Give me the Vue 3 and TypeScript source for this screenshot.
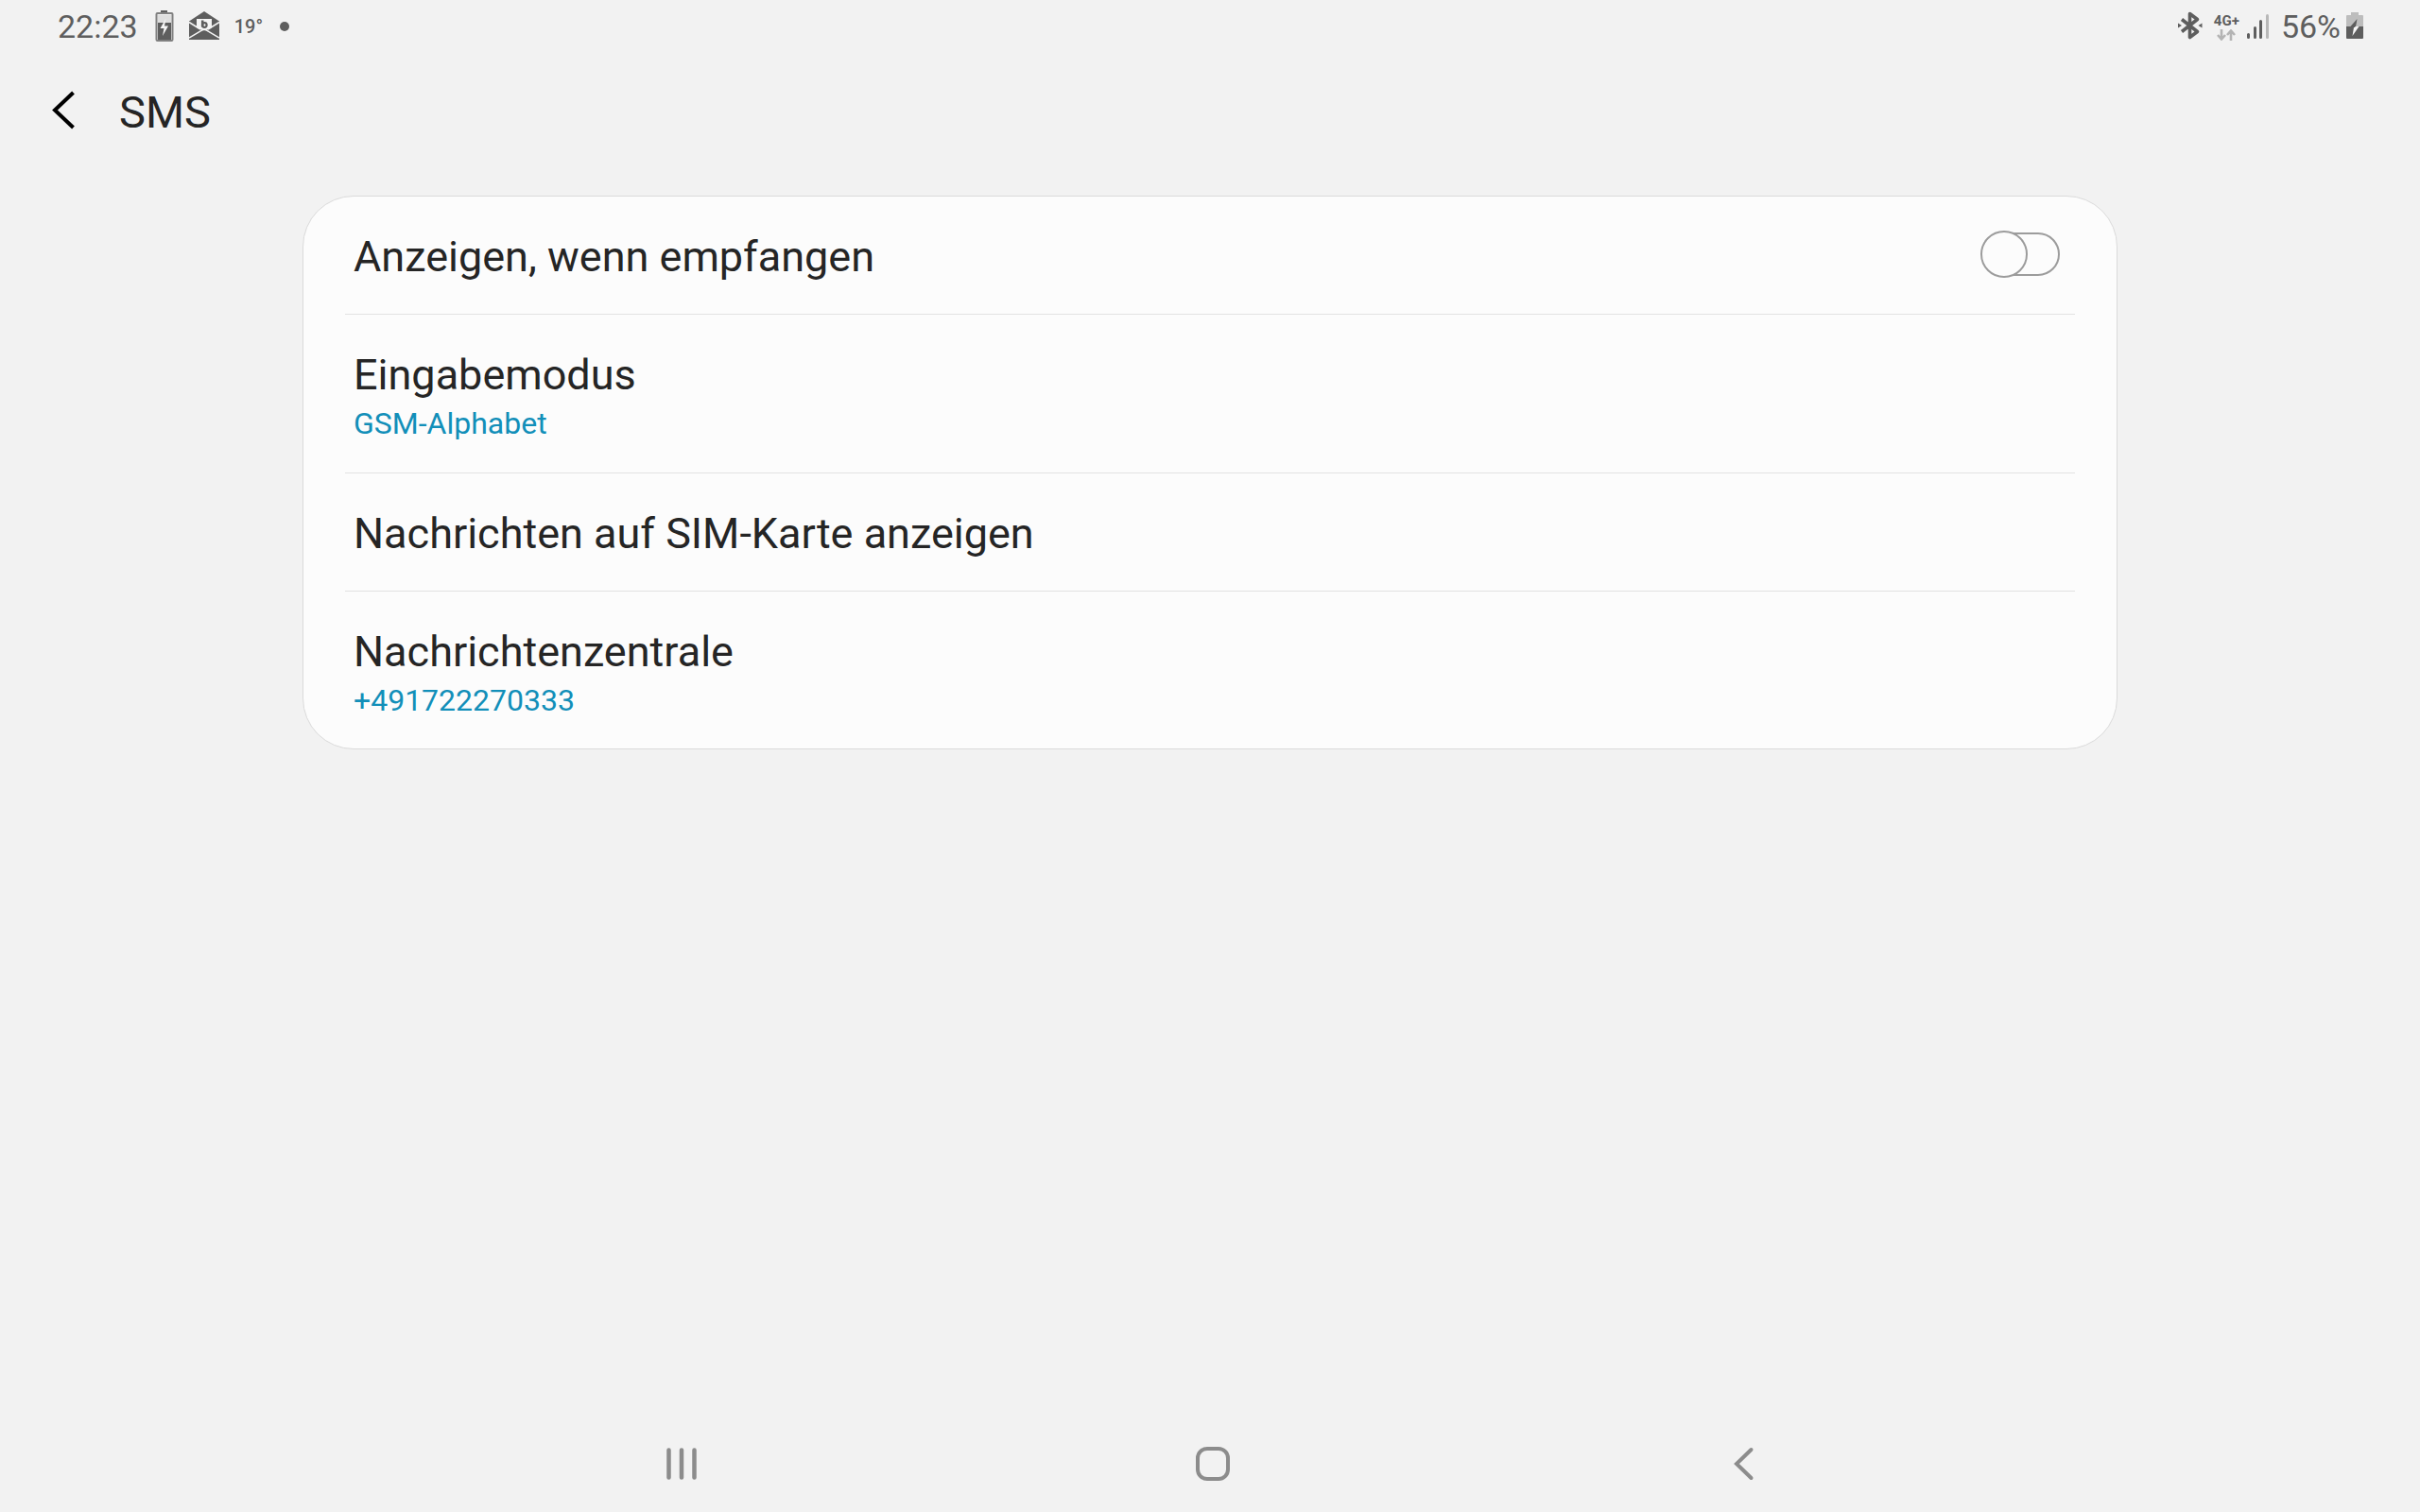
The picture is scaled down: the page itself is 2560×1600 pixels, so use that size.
<script setup lang="ts">
import { ref } from 'vue'

interface SettingRow {
  id: string
  title: string
  value?: string
}

const time = '22:23'
const battery = '56%'
const showOnReceive = ref<boolean>(false)

const rows: SettingRow[] = [
  { id: 'input-mode', title: 'Eingabemodus', value: 'GSM-Alphabet' },
  { id: 'sim-messages', title: 'Nachrichten auf SIM-Karte anzeigen' },
  { id: 'message-center', title: 'Nachrichtenzentrale', value: '+491722270333' },
]
</script>

<template>
  <div class="screen">
    <div class="status">
      <div class="status-side">
        <span class="status-text">{{ time }}</span>
        <svg class="ic-charge" width="20" height="34" viewBox="0 0 20 34" aria-hidden="true">
          <rect x="6" y="0" width="7" height="3" fill="#5e5e5e" />
          <rect x="1.500" y="3" width="17" height="29" rx="1" fill="#f1f1f1" stroke="#808080" stroke-width="2" />
          <rect x="3" y="13" width="14" height="18" fill="#5e5e5e" />
          <rect x="3" y="5" width="14" height="8" fill="#dedede" />
          <path d="M11.500 8.500L5.500 19h4l-1.500 8L14 16.500h-4z" fill="#f6f6f6" />
        </svg>
        <svg class="ic-mail" width="32" height="34" viewBox="0 0 32 34" aria-hidden="true">
          <path d="M16 1L32 11.500V31H0V11.500z" fill="#5e5e5e" />
          <path d="M8 9h16v9.500L16 22 8 18.500z" fill="#f4f4f4" />
          <path d="M0 12.500L12 20M32 12.500L20 20" stroke="#f4f4f4" stroke-width="1.500" />
          <path d="M0 29L16 19.500 32 29" fill="none" stroke="#f4f4f4" stroke-width="1.500" />
          <path d="M3 29L16 21l13 8z" fill="#5e5e5e" />
          <path d="M14.200 10.500v7" stroke="#5e5e5e" stroke-width="2.600" />
          <circle cx="16.300" cy="15.500" r="2.300" fill="none" stroke="#5e5e5e" stroke-width="2.200" />
        </svg>
        <span class="temp">19°</span>
        <span class="dot"></span>
      </div>
      <div class="status-side">
        <svg class="ic-bt" width="26" height="32" viewBox="0 0 26 32" aria-hidden="true">
          <path d="M4 8.500L20.500 21.500 12.500 27.500V2.500L20.500 8.500 4 21.500" fill="none" stroke="#5e5e5e" stroke-width="3.600" stroke-linejoin="round" />
          <path d="M0 12.500L4 15 0 17.500zM25.500 12.500L21.500 15l4 2.500z" fill="#5e5e5e" />
        </svg>
        <div class="network">
          <span class="network-text">4G+</span>
          <svg width="20" height="12" viewBox="0 0 20 12" aria-hidden="true">
            <path d="M5 0v10M1 6l4 4.500L9 6M15 12V2M11 6l4-4.500L19 6" fill="none" stroke="#b4b4b4" stroke-width="2.600" />
          </svg>
        </div>
        <svg class="ic-signal" width="24" height="28" viewBox="0 0 24 28" aria-hidden="true">
          <path d="M1.500 22.500v3M8.500 15.500v10M14.500 8.500v17" stroke="#5e5e5e" stroke-width="3" stroke-linecap="round" />
          <path d="M21.500 2.500v23" stroke="#b8b8b8" stroke-width="3" stroke-linecap="round" />
        </svg>
        <span class="status-text">{{ battery }}</span>
        <svg class="ic-battery" width="18" height="30" viewBox="0 0 18 30" aria-hidden="true">
          <path d="M5 0h8v3h4q1 0 1 1v11H0V4q0-1 1-1h4z" fill="#bdbdbd" />
          <path d="M0 15h18v12q0 1-1 1H1q-1 0-1-1z" fill="#5e5e5e" />
          <path d="M11.500 7L4 15.500h6z" fill="#5e5e5e" />
          <path d="M4.500 16H8L6.500 25 13.500 15H9.500L9 16z" fill="#f6f6f6" />
        </svg>
      </div>
    </div>

    <header class="appbar">
      <button class="back" type="button" aria-label="Zurück">
        <svg width="26" height="46" viewBox="0 0 26 46" aria-hidden="true">
          <path d="M23.500 2L4 20.500 23.500 39" fill="none" stroke="#000" stroke-width="4" />
        </svg>
      </button>
      <h1>SMS</h1>
    </header>

    <main>
      <div class="card">
        <label class="row" for="show-on-receive">
          <span class="title">Anzeigen, wenn empfangen</span>
          <input id="show-on-receive" v-model="showOnReceive" class="switch" type="checkbox" role="switch" />
        </label>
        <button v-for="row in rows" :key="row.id" class="row" type="button">
          <span class="texts">
            <span class="title">{{ row.title }}</span>
            <span v-if="row.value" class="value">{{ row.value }}</span>
          </span>
        </button>
      </div>
    </main>

    <nav class="navbar">
      <button type="button" aria-label="Letzte Apps">
        <svg width="36" height="36" viewBox="0 0 36 36" aria-hidden="true">
          <path d="M4.500 3.500v29M18 3.500v29M31.500 3.500v29" stroke="#8c8c8c" stroke-width="4.500" stroke-linecap="round" />
        </svg>
      </button>
      <button type="button" aria-label="Startseite">
        <svg width="36" height="36" viewBox="0 0 36 36" aria-hidden="true">
          <rect x="2" y="2" width="32" height="32" rx="10" fill="none" stroke="#8c8c8c" stroke-width="4" />
        </svg>
      </button>
      <button type="button" aria-label="Zurück">
        <svg width="36" height="36" viewBox="0 0 36 36" aria-hidden="true">
          <path d="M25.500 3L10 18l15.500 15" fill="none" stroke="#8c8c8c" stroke-width="4" stroke-linecap="round" />
        </svg>
      </button>
    </nav>
  </div>
</template>

<style>
body {
  margin: 0;
  background: #f2f2f2;
}
</style>

<style scoped>
.screen {
  display: flex;
  flex-direction: column;
  min-height: 100vh;
  background: #f2f2f2;
  color: #252525;
  font-family: Roboto, "Liberation Sans", sans-serif;
}

svg {
  display: block;
}

button {
  margin: 0;
  padding: 0;
  border: 0;
  background: none;
  color: inherit;
  font: inherit;
  text-align: left;
  cursor: pointer;
}

.status {
  display: flex;
  justify-content: space-between;
  padding: 0 60px 0 61px;
  height: 56px;
  color: #5e5e5e;
}

.status-side {
  display: flex;
  align-items: center;
}

.status-text {
  font-size: 34px;
  line-height: 40px;
}

.ic-charge {
  margin-left: 18px;
}

.ic-mail {
  margin-left: 16px;
}

.temp {
  margin-left: 16px;
  font-size: 20px;
  font-weight: 500;
  line-height: 24px;
}

.dot {
  width: 10px;
  height: 10px;
  margin-left: 18px;
  border-radius: 50%;
  background: #5e5e5e;
}

.network {
  display: flex;
  flex-direction: column;
  align-items: center;
  margin: 0 8px 0 12px;
}

.network-text {
  font-size: 15px;
  font-weight: 700;
  line-height: 18px;
}

.ic-signal {
  margin-right: 12px;
}

.ic-battery {
  margin-left: 6px;
}

.appbar {
  display: flex;
  align-items: center;
  height: 126px;
  padding: 0 54px;
}

h1 {
  margin: 0 0 0 46px;
  font-size: 47px;
  font-weight: 400;
  line-height: 56px;
}

main {
  flex: 1;
  padding: 25px 12.5%;
}

.card {
  box-sizing: border-box;
  padding: 0 44px;
  border: 1px solid #dadada;
  border-radius: 54px;
  background: #fcfcfc;
}

.row {
  display: flex;
  align-items: flex-start;
  justify-content: space-between;
  box-sizing: border-box;
  width: 100%;
  padding: 36px 16px 32px 9px;
  cursor: pointer;
}

.row + .row {
  border-top: 1px solid #e2e2e2;
}

.row:last-child {
  padding-bottom: 31px;
}

.texts {
  display: flex;
  flex-direction: column;
  gap: 3px;
}

.title {
  font-size: 45px;
  line-height: 56px;
}

.value {
  color: #128fb9;
  font-size: 32px;
  line-height: 40px;
}

.switch {
  position: relative;
  flex: none;
  width: 84px;
  height: 50px;
  margin: 0;
  appearance: none;
  cursor: pointer;
}

.switch::before,
.switch::after {
  content: "";
  position: absolute;
  box-sizing: border-box;
  border: 2px solid #9c9c9c;
  background: #fcfcfc;
}

.switch::before {
  inset: 2px 0 2px 4px;
  border-radius: 23px;
}

.switch::after {
  top: 0;
  left: 0;
  width: 50px;
  height: 50px;
  border-radius: 50%;
}

.switch:checked::after {
  left: 34px;
}

.navbar {
  display: flex;
  justify-content: center;
  height: 102px;
  padding-left: 6px;
}

.navbar button {
  display: flex;
  align-items: center;
  justify-content: center;
  width: 22%;
}
</style>
